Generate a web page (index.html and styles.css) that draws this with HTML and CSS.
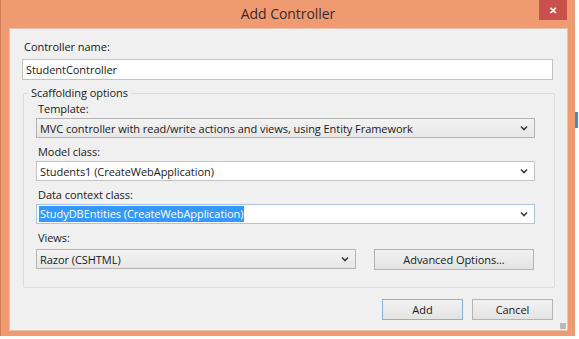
FILE: index.html
```html
<!DOCTYPE html>
<html lang="en">
<head>
  <meta charset="UTF-8" />
  <title>Add Controller</title>
  <link rel="stylesheet" href="styles.css">
</head>
<body>

  <!-- DIALOG WINDOW -->
  <div class="window">
    <div class="titlebar">
      <span class="title">Add Controller</span>
      <span class="close">&#x2715;</span>
    </div>

    <div class="client">
      <div class="label">Controller name:</div>
      <div class="textbox">StudentController</div>

      <!-- SCAFFOLDING OPTIONS -->
      <fieldset class="group">
        <legend>Scaffolding options</legend>

        <div class="field">
          <div class="label">Template:</div>
          <div class="combo list">
            <span>MVC controller with read/write actions and views, using Entity Framework</span>
            <svg class="arrow" width="8" height="6" viewBox="0 0 8 6"><polyline points="1,1.5 4,4.5 7,1.5" fill="none" stroke="#3c3c3c" stroke-width="1.6"/></svg>
          </div>
        </div>

        <div class="field">
          <div class="label">Model class:</div>
          <div class="combo">
            <span>Students1 (CreateWebApplication)</span>
            <svg class="arrow" width="8" height="6" viewBox="0 0 8 6"><polyline points="1,1.5 4,4.5 7,1.5" fill="none" stroke="#3c3c3c" stroke-width="1.6"/></svg>
          </div>
        </div>

        <div class="field">
          <div class="label">Data context class:</div>
          <div class="combo focused">
            <span class="selected">StudyDBEntities (CreateWebApplication)</span>
            <svg class="arrow" width="8" height="6" viewBox="0 0 8 6"><polyline points="1,1.5 4,4.5 7,1.5" fill="none" stroke="#3c3c3c" stroke-width="1.6"/></svg>
          </div>
        </div>

        <div class="field">
          <div class="label">Views:</div>
          <div class="views-row">
            <div class="combo list views">
              <span>Razor (CSHTML)</span>
              <svg class="arrow" width="8" height="6" viewBox="0 0 8 6"><polyline points="1,1.5 4,4.5 7,1.5" fill="none" stroke="#3c3c3c" stroke-width="1.6"/></svg>
            </div>
            <button class="btn advanced">Advanced Options...</button>
          </div>
        </div>
      </fieldset>

      <!-- DIALOG BUTTONS -->
      <div class="actions">
        <button class="btn default">Add</button>
        <button class="btn">Cancel</button>
      </div>
      <span class="grip"></span>
    </div>
  </div>

  <!-- EDGE OF THE PAGE BEHIND -->
  <div class="behind">
    <span class="mark"></span>
  </div>

</body>
</html>
```

FILE: styles.css
```css
body {
  margin: 0;
  background: #ffffff;
  font-family: "Open Sans", "Noto Sans", sans-serif;
  font-size: 11px;
  letter-spacing: -0.05px;
  color: #1a1a1a;
  display: flex;
  align-items: flex-start;
}

/* WINDOW FRAME */
.window {
  width: 575px;
  height: 336px;
  background: #f09a72;
  border-left: 1px solid #cf7d58;
  box-sizing: border-box;
  display: flex;
  flex-direction: column;
}

.titlebar {
  height: 28px;
  display: flex;
  justify-content: center;
  align-items: center;
  position: relative;
}

.title {
  font-size: 14px;
  color: #3a2b26;
  margin-top: -1px;
}

.close {
  position: absolute;
  top: 0;
  right: 8px;
  width: 28px;
  height: 20px;
  background: #c9504c;
  color: #ffffff;
  font-size: 10px;
  font-weight: bold;
  display: flex;
  justify-content: center;
  align-items: center;
}

/* CLIENT AREA */
.client {
  margin: 0 7px 0 8px;
  height: 303px;
  background: #f0f0f0;
  border: 1px solid #e9c2ae;
  box-sizing: border-box;
  padding: 9px 14px 0 12px;
  display: flex;
  flex-direction: column;
  position: relative;
}

.label {
  height: 15px;
  line-height: 15px;
  padding-left: 2px;
  margin-bottom: 2px;
}

.client > .label {
  margin-top: 1px;
  margin-bottom: 5px;
}

.textbox {
  height: 21px;
  line-height: 19px;
  box-sizing: border-box;
  background: #ffffff;
  border: 1px solid #c3c3c3;
  padding-left: 3px;
}

/* SCAFFOLDING GROUP */
.group {
  margin: 5px -2px 0 1px;
  padding: 0 19px 17px 12px;
  border: 1px solid #dcdcdc;
  border-radius: 2px;
}

.group legend {
  padding: 0 3px;
  margin-left: -8px;
  line-height: 16px;
}

.field {
  margin-top: 6px;
}

.field:first-of-type {
  margin-top: 0;
}

.combo {
  height: 20px;
  box-sizing: border-box;
  background: #ffffff;
  border: 1px solid #c3c3c3;
  display: flex;
  align-items: center;
  justify-content: space-between;
  padding: 0 6px 0 3px;
}

.combo.list {
  background: linear-gradient(#f3f3f3, #e6e6e6);
  border-color: #b4b4b4;
}

.combo.focused {
  border-color: #a9c6e8;
}

.selected {
  background: #3399ff;
  color: #ffffff;
  margin-left: -1px;
  padding: 0 1px;
  line-height: 16px;
}

.arrow {
  flex: none;
}

.views-row {
  display: flex;
  gap: 18px;
  margin-top: 4px;
}

.views {
  width: 320px;
}

/* BUTTONS */
.btn {
  font-family: inherit;
  font-size: 11px;
  letter-spacing: inherit;
  color: #1a1a1a;
  height: 21px;
  padding: 0;
  background: linear-gradient(#f2f2f2, #e3e3e3);
  border: 1px solid #b4b4b4;
  border-radius: 0;
}

.advanced {
  width: 160px;
}

.actions {
  display: flex;
  justify-content: flex-end;
  gap: 9px;
  margin: 11px 0 0;
}

.actions .btn {
  width: 81px;
}

.default {
  border-color: #7eb4ea;
}

.grip {
  position: absolute;
  right: 1px;
  bottom: 1px;
  width: 6px;
  height: 6px;
  background: radial-gradient(circle, #b9b9b9 0.8px, transparent 1px) 0 0 / 2px 2px;
}

/* PAGE BEHIND THE DIALOG */
.behind {
  flex: 1;
  padding-top: 112px;
}

.mark {
  display: block;
  width: 3px;
  height: 16px;
  background: #4a86c8;
}
```
